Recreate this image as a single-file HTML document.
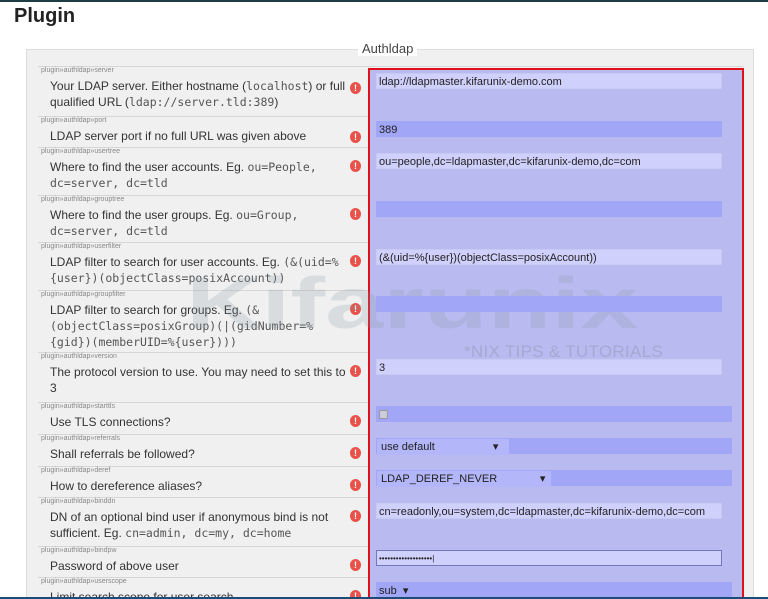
<!DOCTYPE html>
<html><head><meta charset="utf-8"><style>
html,body{margin:0;width:768px;height:599px;overflow:hidden}
body{background:#fff;font-family:"Liberation Sans",sans-serif;position:relative}
.a{position:absolute}
.top{left:0;top:0;width:768px;height:2px;background:#1d3c44}
h1{position:absolute;left:14px;top:5px;margin:0;font-size:20px;font-weight:bold;color:#222}
.fs{left:26px;top:49px;width:726px;height:560px;background:#f0f0f0;border:1px solid #ddd}
.lg{left:358px;top:41px;background:#fff;padding:0 4px;font-size:13px;color:#444}
.row{position:absolute;left:38px;width:705px;border-top:1px solid #d6d6d6}
.k{position:absolute;left:3px;top:0;font-size:7px;color:#888;background:#f0f0f0}
.d{position:absolute;left:12px;top:11px;width:300px;font-size:12px;line-height:16px;color:#333}
.d code{font-family:"DejaVu Sans Mono",monospace;font-size:11.5px;color:#555}
.i{position:absolute;left:312px;width:11px;height:12px;border-radius:50%;background:#e8524a;color:#fff;font-size:9px;font-weight:bold;text-align:center;line-height:12px}
.red{left:368px;top:68px;width:372px;height:540px;border:2px solid #e0101c;background:#b9bbf0}
.in{position:absolute;left:376px;height:16px;border:1px solid #c8c9f2;background:#cfd0fb;font-size:11px;line-height:16px;padding-left:2px;color:#222;box-sizing:border-box}
.dk{background:#a2a6f6;border-color:#a2a6f6}
.wm{left:186px;top:268px;font-size:72px;font-weight:900;color:rgba(130,150,160,0.22);letter-spacing:0;line-height:1;transform:scaleX(1.45);transform-origin:left}
.wm2{left:464px;top:342px;font-size:17px;color:rgba(120,130,140,0.3);letter-spacing:0.3px}
.bot{left:0;top:597px;width:768px;height:2px;background:#1b4d78}
</style></head><body>
<div class="a top"></div>
<h1>Plugin</h1>
<div class="a fs"></div>
<div class="a lg">Authldap</div>

<div class="row" style="top:66px;height:50px"><span class="k">plugin»authldap»server</span><div class="d">Your LDAP server. Either hostname (<code>localhost</code>) or full qualified URL (<code>ldap://server.tld:389</code>)</div><div class="i" style="top:15px">!</div></div>
<div class="row" style="top:116px;height:31px"><span class="k">plugin»authldap»port</span><div class="d">LDAP server port if no full URL was given above</div><div class="i" style="top:14px">!</div></div>
<div class="row" style="top:147px;height:48px"><span class="k">plugin»authldap»usertree</span><div class="d">Where to find the user accounts. Eg. <code>ou=People, dc=server, dc=tld</code></div><div class="i" style="top:12px">!</div></div>
<div class="row" style="top:195px;height:47px"><span class="k">plugin»authldap»grouptree</span><div class="d">Where to find the user groups. Eg. <code>ou=Group, dc=server, dc=tld</code></div><div class="i" style="top:12px">!</div></div>
<div class="row" style="top:242px;height:48px"><span class="k">plugin»authldap»userfilter</span><div class="d">LDAP filter to search for user accounts. Eg. <code>(&amp;(uid=%{user})(objectClass=posixAccount))</code></div><div class="i" style="top:12px">!</div></div>
<div class="row" style="top:290px;height:62px"><span class="k">plugin»authldap»groupfilter</span><div class="d">LDAP filter to search for groups. Eg. <code>(&amp;(objectClass=posixGroup)(|(gidNumber=%{gid})(memberUID=%{user})))</code></div><div class="i" style="top:12px">!</div></div>
<div class="row" style="top:352px;height:50px"><span class="k">plugin»authldap»version</span><div class="d">The protocol version to use. You may need to set this to 3</div><div class="i" style="top:12px">!</div></div>
<div class="row" style="top:402px;height:32px"><span class="k">plugin»authldap»starttls</span><div class="d">Use TLS connections?</div><div class="i" style="top:12px">!</div></div>
<div class="row" style="top:434px;height:32px"><span class="k">plugin»authldap»referrals</span><div class="d">Shall referrals be followed?</div><div class="i" style="top:12px">!</div></div>
<div class="row" style="top:466px;height:31px"><span class="k">plugin»authldap»deref</span><div class="d">How to dereference aliases?</div><div class="i" style="top:12px">!</div></div>
<div class="row" style="top:497px;height:49px"><span class="k">plugin»authldap»binddn</span><div class="d">DN of an optional bind user if anonymous bind is not sufficient. Eg. <code>cn=admin, dc=my, dc=home</code></div><div class="i" style="top:12px">!</div></div>
<div class="row" style="top:546px;height:31px"><span class="k">plugin»authldap»bindpw</span><div class="d">Password of above user</div><div class="i" style="top:12px">!</div></div>
<div class="row" style="top:577px;height:30px"><span class="k">plugin»authldap»userscope</span><div class="d">Limit search scope for user search</div><div class="i" style="top:12px">!</div></div>

<div class="a red"></div>
<div class="a wm">Kifarunix</div>
<div class="a wm2">*NIX TIPS &amp; TUTORIALS</div>
<div class="in" style="top:73px;width:346px">ldap://ldapmaster.kifarunix-demo.com</div>
<div class="in dk" style="top:121px;width:346px">389</div>
<div class="in" style="top:153px;width:346px">ou=people,dc=ldapmaster,dc=kifarunix-demo,dc=com</div>
<div class="in dk" style="top:201px;width:346px"></div>
<div class="in" style="top:249px;width:346px">(&amp;(uid=%{user})(objectClass=posixAccount))</div>
<div class="in dk" style="top:296px;width:346px"></div>
<div class="in" style="top:359px;width:346px">3</div>
<div class="in dk" style="top:406px;width:356px"><span style="display:inline-block;width:7px;height:7px;border:1px solid #999;border-radius:2px;background:#ccd;margin-top:3px"></span></div>
<div class="in dk" style="top:438px;width:356px;padding-left:0"><span style="display:inline-block;width:128px;background:#b3b6f8;padding-left:4px">use default&nbsp;&nbsp;&nbsp;&nbsp;&nbsp;&nbsp;&nbsp;&nbsp;&nbsp;&nbsp;&nbsp;&nbsp;&nbsp;&nbsp;&nbsp;&nbsp;&nbsp;&nbsp;&nbsp;▾</span></div>
<div class="in dk" style="top:470px;width:356px;padding-left:0"><span style="display:inline-block;width:170px;background:#b3b6f8;padding-left:4px">LDAP_DEREF_NEVER&nbsp;&nbsp;&nbsp;&nbsp;&nbsp;&nbsp;&nbsp;&nbsp;&nbsp;&nbsp;&nbsp;&nbsp;&nbsp;&nbsp;▾</span></div>
<div class="in" style="top:503px;width:346px">cn=readonly,ou=system,dc=ldapmaster,dc=kifarunix-demo,dc=com</div>
<div class="in" style="top:550px;width:346px;border-color:#7078c0;font-size:8px">•••••••••••••••••••|</div>
<div class="in dk" style="top:582px;width:356px">sub&nbsp;&nbsp;▾</div>
<div class="a bot"></div>
</body></html>
